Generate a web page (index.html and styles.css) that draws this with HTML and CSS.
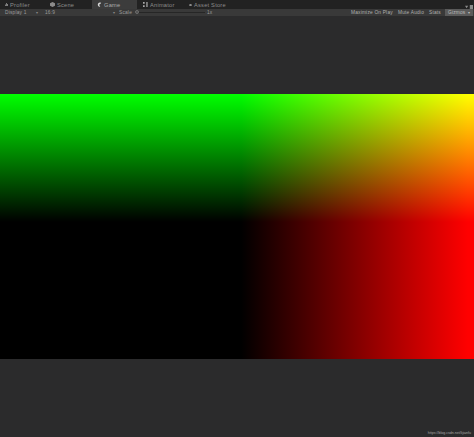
FILE: index.html
```html
<!DOCTYPE html>
<html lang="en">
<head>
<meta charset="utf-8">
<title>Game view</title>
<link rel="stylesheet" href="styles.css">
</head>
<body>
<div class="editor">
  <div class="tabs">
    <div class="tab tab-profiler"><svg class="ico" viewBox="0 0 6 6"><path d="M0 6V3h1.500v3zM2.200 6V0h1.500v6zM4.400 6V2H6v4z" fill="#9a9a9a"/></svg>Profiler</div>
    <div class="tab tab-scene"><svg class="ico ico-lg" viewBox="0 0 6 6"><path d="M3 0 6 1.500V4.500L3 6 0 4.500V1.500z" fill="#8b8b8b"/></svg>Scene</div>
    <div class="tab tab-game active"><svg class="ico ico-lg" viewBox="0 0 6 6"><path d="M1 3a2.500 2.500 0 0 1 4-2L4 2.500h-1V5l1 1A2.700 2.700 0 0 1 1 3z" fill="#d8d8d8"/></svg>Game</div>
    <div class="tab tab-animator"><svg class="ico ico-lg" viewBox="0 0 6 6"><path d="M0 0h2v2H0zM0 4h2v2H0zM4 0h1.500v6H4z" fill="#a8a8a8"/></svg>Animator</div>
    <div class="tab tab-store"><svg class="ico" viewBox="0 0 6 6"><path d="M1 2h4l.5 4h-5z" fill="#8b8b8b"/></svg>Asset Store</div>
    <svg class="tab-menu" viewBox="0 0 10 5"><path d="M0 1h4L2 4zM6 0h4v5H6z" fill="#8a8a8a"/></svg>
  </div>
  <div class="toolbar">
    <span class="tool tool-display">Display 1</span><span class="caret caret-display">▾</span>
    <span class="tool tool-aspect">16:9</span><span class="caret caret-aspect">▾</span>
    <span class="tool tool-scale">Scale</span>
    <span class="slider"><i class="thumb"></i></span>
    <span class="tool tool-value">1x</span>
    <span class="spacer"></span>
    <span class="tool tool-max">Maximize On Play</span>
    <span class="tool tool-mute">Mute Audio</span>
    <span class="tool tool-stats">Stats</span>
    <span class="tool tool-gizmos">Gizmos<span class="caret-in">▾</span></span>
  </div>
  <div class="viewport">
    <div class="band"></div>
    <div class="game"></div>
    <div class="band band-bottom"><span class="watermark">https://blog.csdn.net/lijianfu</span></div>
  </div>
</div>
</body>
</html>
```
FILE: styles.css
```css
* { box-sizing: border-box; }
html, body { margin: 0; height: 100%; background: #2b2b2c; }
.editor {
  width: 474px; height: 437px; display: flex; flex-direction: column; overflow: hidden;
  font-family: "Liberation Sans", Arial, sans-serif; color: #a8a8a8;
}
.tabs {
  height: 9px; flex: none; display: flex; align-items: center; background: #222; font-size: 5.7px; letter-spacing: .22px;
  position: relative;
}
.tab { height: 9px; display: flex; align-items: center; white-space: nowrap; color: #8c8c8c; }
.tab.active { background: #3c3c3c; color: #adadad; }
.tab-profiler { width: 46px; padding-left: 5px; }
.tab-scene { width: 46px; padding-left: 4px; }
.tab-game { width: 45px; padding-left: 5px; }
.tab-animator { width: 46px; padding-left: 6px; }
.tab-store { padding-left: 6px; }
.ico { width: 3px; height: 3px; margin-right: 2px; flex: none; }
.ico-lg { width: 5px; height: 5px; margin-right: 2px; }
.tab-menu { position: absolute; right: 1px; top: 5px; width: 8px; height: 4px; }
.toolbar {
  height: 7px; flex: none; display: flex; align-items: center; font-size: 4.8px; letter-spacing: .2px;
  background: #393939; color: #9c9c9c; box-shadow: 0 1px 0 #1f1f1f;
}
.tool { white-space: nowrap; }
.tool-display { margin-left: 5px; width: 31px; }
.caret { font-size: 4px; color: #888; }
.caret-display { width: 9px; }
.tool-aspect { width: 68px; }
.caret-aspect { width: 6px; }
.tool-scale { width: 16px; }
.slider { width: 70px; height: 7px; position: relative; display: block; }
.slider::before { content: ""; position: absolute; left: 0; right: 0; top: 3px; height: 1px; background: #262626; }
.thumb { position: absolute; left: 0; top: 1px; width: 4px; height: 4px; border: 1px solid #6e6e6e; border-radius: 50%; background: #4a4a4a; }
.tool-value { margin-left: 2px; }
.spacer { flex: 1; }
.tool-max { width: 47px; color: #b0b0b0; }
.tool-mute { width: 31px; color: #b0b0b0; }
.tool-stats { width: 16px; color: #b0b0b0; }
.tool-gizmos { background: #5a5a5a; color: #bcbcbc; height: 7px; width: 28px; margin-right: 1px; padding-left: 3px; display: flex; align-items: center; }
.caret-in { font-size: 4px; margin-left: 3px; }
.viewport { flex: 1; display: flex; flex-direction: column; min-height: 0; }
.band { height: 78px; flex: none; background: #2b2b2c; position: relative; }
.band-bottom { flex: 1; height: auto; }
.game {
  height: 265px; flex: none;
  background-color: #000;
  background-image:
    linear-gradient(to right, #000 241px, #f00 468px),
    linear-gradient(to bottom, #0f0 0, #000 128px);
  background-blend-mode: screen;
}
.watermark {
  position: absolute; right: 3px; bottom: 2px; font-size: 3.6px; color: #a8a8a8; white-space: nowrap;
}
```
